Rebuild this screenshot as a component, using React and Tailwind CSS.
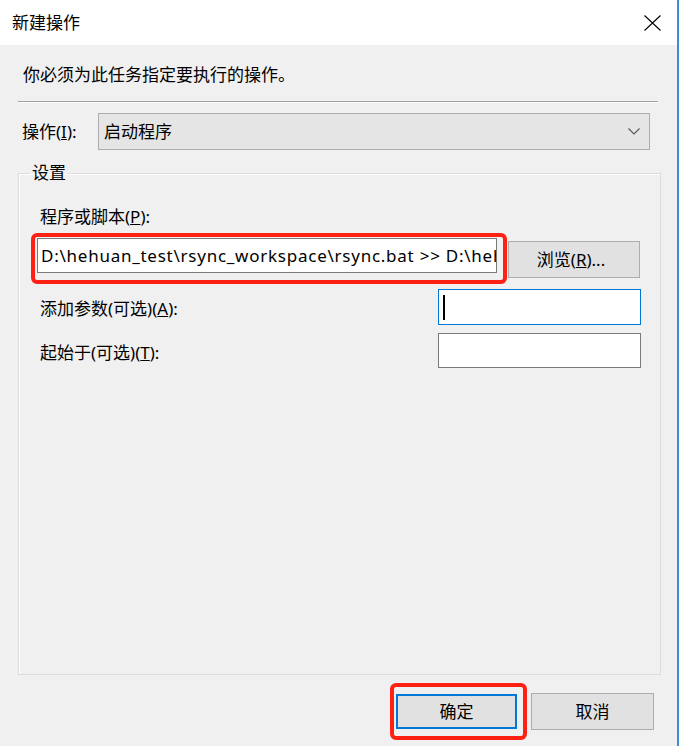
import React from "react";

const font = { fontFamily: "'Noto Sans', 'Noto Sans CJK SC', sans-serif" };

function CloseIcon() {
  return (
    <svg width="17" height="16" viewBox="0 0 17 16" fill="none">
      <path d="M0.5 0.5 L16.5 15.5 M16.5 0.5 L0.5 15.5" stroke="#000" strokeWidth="1.1" />
    </svg>
  );
}

function Chevron() {
  return (
    <svg width="12" height="7" viewBox="0 0 12 7" fill="none">
      <path d="M0.5 0.5 L6 6 L11.5 0.5" stroke="#555" strokeWidth="1.1" />
    </svg>
  );
}

export default function App() {
  return (
    <div
      className="w-[679px] h-[746px] flex flex-col border-r-2 border-[#3a8ddc] text-[17px] leading-[24px] text-black overflow-hidden"
      style={font}
    >
      {/* Title bar */}
      <div className="h-[45px] bg-white flex items-center justify-between pl-[12px] pr-[16px] shrink-0">
        <span className="text-[17px]">新建操作</span>
        <CloseIcon />
      </div>

      {/* Body */}
      <div className="flex-1 bg-[#f0f0f0] flex flex-col pl-[18px] pr-[19px]">
        <div className="pt-[18px] pl-[5px]">你必须为此任务指定要执行的操作。</div>
        <div className="mt-[14px] border-t border-[#a0a0a0] border-b border-b-white" />

        <div className="mt-[10px] flex items-center">
          <span className="pl-[4px] w-[80px]">操作(<span className="underline">I</span>):</span>
          <div className="w-[552px] h-[37px] bg-[#e5e5e5] border border-[#adadad] flex items-center justify-between pl-[5px] pr-[9px]">
            <span>启动程序</span>
            <Chevron />
          </div>
        </div>

        <fieldset className="mt-[11px] w-[643px] h-[514px] border border-[#dcdcdc] shadow-[inset_1px_1px_0_#ffffff] pl-[21px] pr-[19px] pt-[20px]">
          <legend className="-ml-[10px] px-[2px]">设置</legend>
          <div>程序或脚本(<span className="underline">P</span>):</div>

          <div className="mt-[4px] -ml-[9px] flex items-start">
            <div className="w-[476px] h-[51px] border-4 border-[#ff2214] rounded-[6px] pl-[2px] pt-[1px]">
              <div className="w-[460px] h-[35px] bg-white border border-[#7a7a7a] pl-[3px] flex items-center overflow-hidden whitespace-nowrap tracking-[0.75px]">
                D:\hehuan_test\rsync_workspace\rsync.bat &gt;&gt; D:\hehuan_test\rsync_workspace\log.txt
              </div>
            </div>
            <div className="ml-[1px] mt-[8px] w-[132px] h-[37px] bg-[#e1e1e1] border border-[#adadad] flex items-center justify-center pr-[6px]">
              <span>浏览(<span className="underline">R</span>)...</span>
            </div>
          </div>

          <div className="mt-[5px] flex items-center justify-between">
            <span className="pt-[4px]">添加参数(可选)(<span className="underline">A</span>):</span>
            <div className="w-[203px] h-[36px] bg-white border border-[#0078d7] flex items-center pl-[4px]">
              <span className="w-[2px] h-[25px] bg-black" />
            </div>
          </div>

          <div className="mt-[8px] flex items-center justify-between">
            <span className="pt-[4px]">起始于(可选)(<span className="underline">T</span>):</span>
            <div className="w-[203px] h-[35px] bg-white border border-[#7a7a7a]" />
          </div>
        </fieldset>

        <div className="mt-[8px] flex justify-end items-start pr-[4px]">
          <div className="w-[137px] h-[57px] border-4 border-[#ff2214] rounded-[6px] pl-[2px] pt-[7px]">
            <div className="w-[121px] h-[35px] bg-[#e1e1e1] border-2 border-[#0078d7] flex items-center justify-center">
              确定
            </div>
          </div>
          <div className="ml-[4px] mt-[10px] w-[123px] h-[37px] bg-[#e1e1e1] border border-[#adadad] flex items-center justify-center">
            取消
          </div>
        </div>
      </div>
    </div>
  );
}
